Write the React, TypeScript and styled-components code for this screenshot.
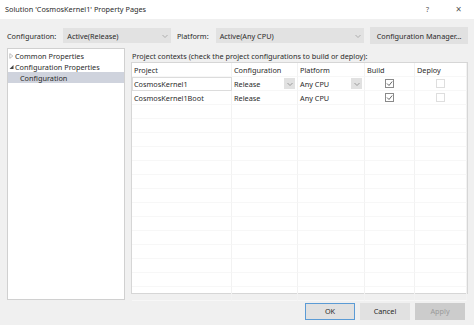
import styled, { createGlobalStyle } from "styled-components";

const GlobalStyle = createGlobalStyle`
  html, body {
    margin: 0;
    padding: 0;
    background: #f0f0f0;
  }
  * {
    box-sizing: border-box;
  }
`;

const Window = styled.div`
  width: 474px;
  height: 325px;
  background: #f0f0f0;
  display: flex;
  flex-direction: column;
  font-family: "Noto Sans", "Open Sans", sans-serif;
  font-size: 7.3px;
  color: #2a2a2a;
  overflow: hidden;
`;

const TitleBar = styled.div`
  height: 19px;
  background: #ffffff;
  display: flex;
  align-items: center;
  padding-left: 5px;
  font-size: 7.3px;
`;

const TitleText = styled.span`
  flex: 1;
`;

const TitleButton = styled.span<{ $big?: boolean }>`
  width: 31px;
  text-align: center;
  color: #555;
  font-size: ${(p) => (p.$big ? "10px" : "7px")};
`;

const ConfigRow = styled.div`
  display: flex;
  align-items: center;
  padding: 8px 6px 0 7px;
  height: 26px;
`;

const Label = styled.span`
  margin-right: 7px;
`;

const Combo = styled.div<{ $w: number }>`
  width: ${(p) => p.$w}px;
  height: 15px;
  background: #e2e2e2;
  display: flex;
  align-items: center;
  padding-left: 4px;
  margin-right: 6px;
`;

const ComboText = styled.span`
  flex: 1;
`;

const Chevron = styled.svg`
  width: 12px;
  height: 12px;
  flex-shrink: 0;
`;

const Button = styled.div<{ $primary?: boolean; $disabled?: boolean; $w?: number }>`
  width: ${(p) => p.$w ?? 50}px;
  height: 17px;
  display: flex;
  align-items: center;
  justify-content: center;
  background: ${(p) => (p.$disabled ? "#cccccc" : "#e1e1e1")};
  border: 1px solid ${(p) => (p.$primary ? "#5b9bd5" : p.$disabled ? "#cccccc" : "#e1e1e1")};
  color: ${(p) => (p.$disabled ? "#9a9a9a" : "#2a2a2a")};
`;

const Body = styled.div`
  flex: 1;
  display: flex;
  gap: 6px;
  padding: 4px 6px 0 7px;
`;

const Tree = styled.div`
  width: 118px;
  height: 252px;
  background: #ffffff;
  border: 1px solid #d0d0d0;
  padding-top: 1px;
`;

const TreeItem = styled.div<{ $indent: number; $selected?: boolean }>`
  height: 11px;
  display: flex;
  align-items: center;
  padding-left: ${(p) => p.$indent}px;
  background: ${(p) => (p.$selected ? "#cfd3dd" : "transparent")};
`;

const Arrow = styled.svg`
  width: 5px;
  height: 6px;
  margin-right: 1px;
  flex-shrink: 0;
`;

const Content = styled.div`
  flex: 1;
  display: flex;
  flex-direction: column;
`;

const Hint = styled.div`
  height: 13px;
  padding-left: 1px;
  display: flex;
  align-items: center;
  margin-top: 1px;
`;

const Grid = styled.div`
  height: 232px;
  background: #ffffff;
  border: 1px solid #d6d6d6;
  display: grid;
  grid-template-columns: 100px 66px 67px 50px 1fr;
  grid-auto-rows: 14px;
  align-content: start;
`;

const Cell = styled.div<{ $center?: boolean; $boxed?: boolean }>`
  display: flex;
  align-items: center;
  justify-content: ${(p) => (p.$center ? "center" : "flex-start")};
  padding-left: ${(p) => (p.$center ? 0 : 2)}px;
  border-right: 1px solid #f2f2f2;
  border-bottom: 1px solid #f7f7f7;
  outline: ${(p) => (p.$boxed ? "1px solid #dcdcdc" : "none")};
  outline-offset: -1px;
  overflow: hidden;
  white-space: nowrap;
`;

const DropCell = styled(Cell)`
  padding-right: 2px;
`;

const DropText = styled.span`
  flex: 1;
`;

const DropButton = styled.span`
  width: 11px;
  height: 11px;
  background: #e1e1e1;
  display: flex;
  align-items: center;
  justify-content: center;
`;

const CheckBox = styled.span<{ $disabled?: boolean }>`
  width: 9px;
  height: 9px;
  border: 1px solid ${(p) => (p.$disabled ? "#dedede" : "#8a8a8a")};
  display: flex;
  align-items: center;
  justify-content: center;
  background: #fff;
`;

const Footer = styled.div`
  display: flex;
  justify-content: flex-end;
  gap: 5px;
  padding: 0 9px 3px 0;
  height: 25px;
  align-items: center;
`;

const Down = ({ color = "#a0a0a0" }: { color?: string }) => (
  <Chevron viewBox="0 0 12 12">
    <path d="M3.5 5 L6 7.5 L8.5 5" fill="none" stroke={color} strokeWidth="0.8" />
  </Chevron>
);

const Collapsed = () => (
  <Arrow viewBox="0 0 5 6">
    <path d="M0.8 0.6 L3.8 3 L0.8 5.4 Z" fill="none" stroke="#a6a6a6" strokeWidth="0.7" />
  </Arrow>
);

const Expanded = () => (
  <Arrow viewBox="0 0 5 6">
    <path d="M4.5 1 L4.5 5 L0.5 5 Z" fill="#444" />
  </Arrow>
);

const Tick = () => (
  <svg width="7" height="7" viewBox="0 0 7 7">
    <path d="M1 3.5 L3 5.5 L6.2 1.5" fill="none" stroke="#555" strokeWidth="0.9" />
  </svg>
);

const rows = [
  { project: "CosmosKernel1", config: "Release", platform: "Any CPU", editing: true },
  { project: "CosmosKernel1Boot", config: "Release", platform: "Any CPU", editing: false },
];

const emptyRows = 14;

export default function App() {
  return (
    <Window>
      <GlobalStyle />
      <TitleBar>
        <TitleText>Solution 'CosmosKernel1' Property Pages</TitleText>
        <TitleButton>?</TitleButton>
        <TitleButton $big>×</TitleButton>
      </TitleBar>

      <ConfigRow>
        <Label>Configuration:</Label>
        <Combo $w={110}>
          <ComboText>Active(Release)</ComboText>
          <Down />
        </Combo>
        <Label>Platform:</Label>
        <Combo $w={152}>
          <ComboText>Active(Any CPU)</ComboText>
          <Down />
        </Combo>
        <Button $w={100}>Configuration Manager...</Button>
      </ConfigRow>

      <Body>
        <Tree>
          <TreeItem $indent={1}>
            <Collapsed />
            Common Properties
          </TreeItem>
          <TreeItem $indent={1}>
            <Expanded />
            Configuration Properties
          </TreeItem>
          <TreeItem $indent={12} $selected>
            Configuration
          </TreeItem>
        </Tree>

        <Content>
          <Hint>Project contexts (check the project configurations to build or deploy):</Hint>
          <Grid>
            <Cell>Project</Cell>
            <Cell>Configuration</Cell>
            <Cell>Platform</Cell>
            <Cell>Build</Cell>
            <Cell>Deploy</Cell>
            {rows.map((r) => (
              <>
                <Cell key={r.project} $boxed={r.editing}>{r.project}</Cell>
                <DropCell>
                  <DropText>{r.config}</DropText>
                  {r.editing && (
                    <DropButton>
                      <Down color="#888" />
                    </DropButton>
                  )}
                </DropCell>
                <DropCell>
                  <DropText>{r.platform}</DropText>
                  {r.editing && (
                    <DropButton>
                      <Down color="#888" />
                    </DropButton>
                  )}
                </DropCell>
                <Cell $center>
                  <CheckBox>
                    <Tick />
                  </CheckBox>
                </Cell>
                <Cell $center>
                  <CheckBox $disabled />
                </Cell>
              </>
            ))}
            {Array.from({ length: emptyRows * 5 }).map((_, i) => (
              <Cell key={i} />
            ))}
          </Grid>
        </Content>
      </Body>

      <Footer>
        <Button $primary>OK</Button>
        <Button>Cancel</Button>
        <Button $disabled>Apply</Button>
      </Footer>
    </Window>
  );
}
